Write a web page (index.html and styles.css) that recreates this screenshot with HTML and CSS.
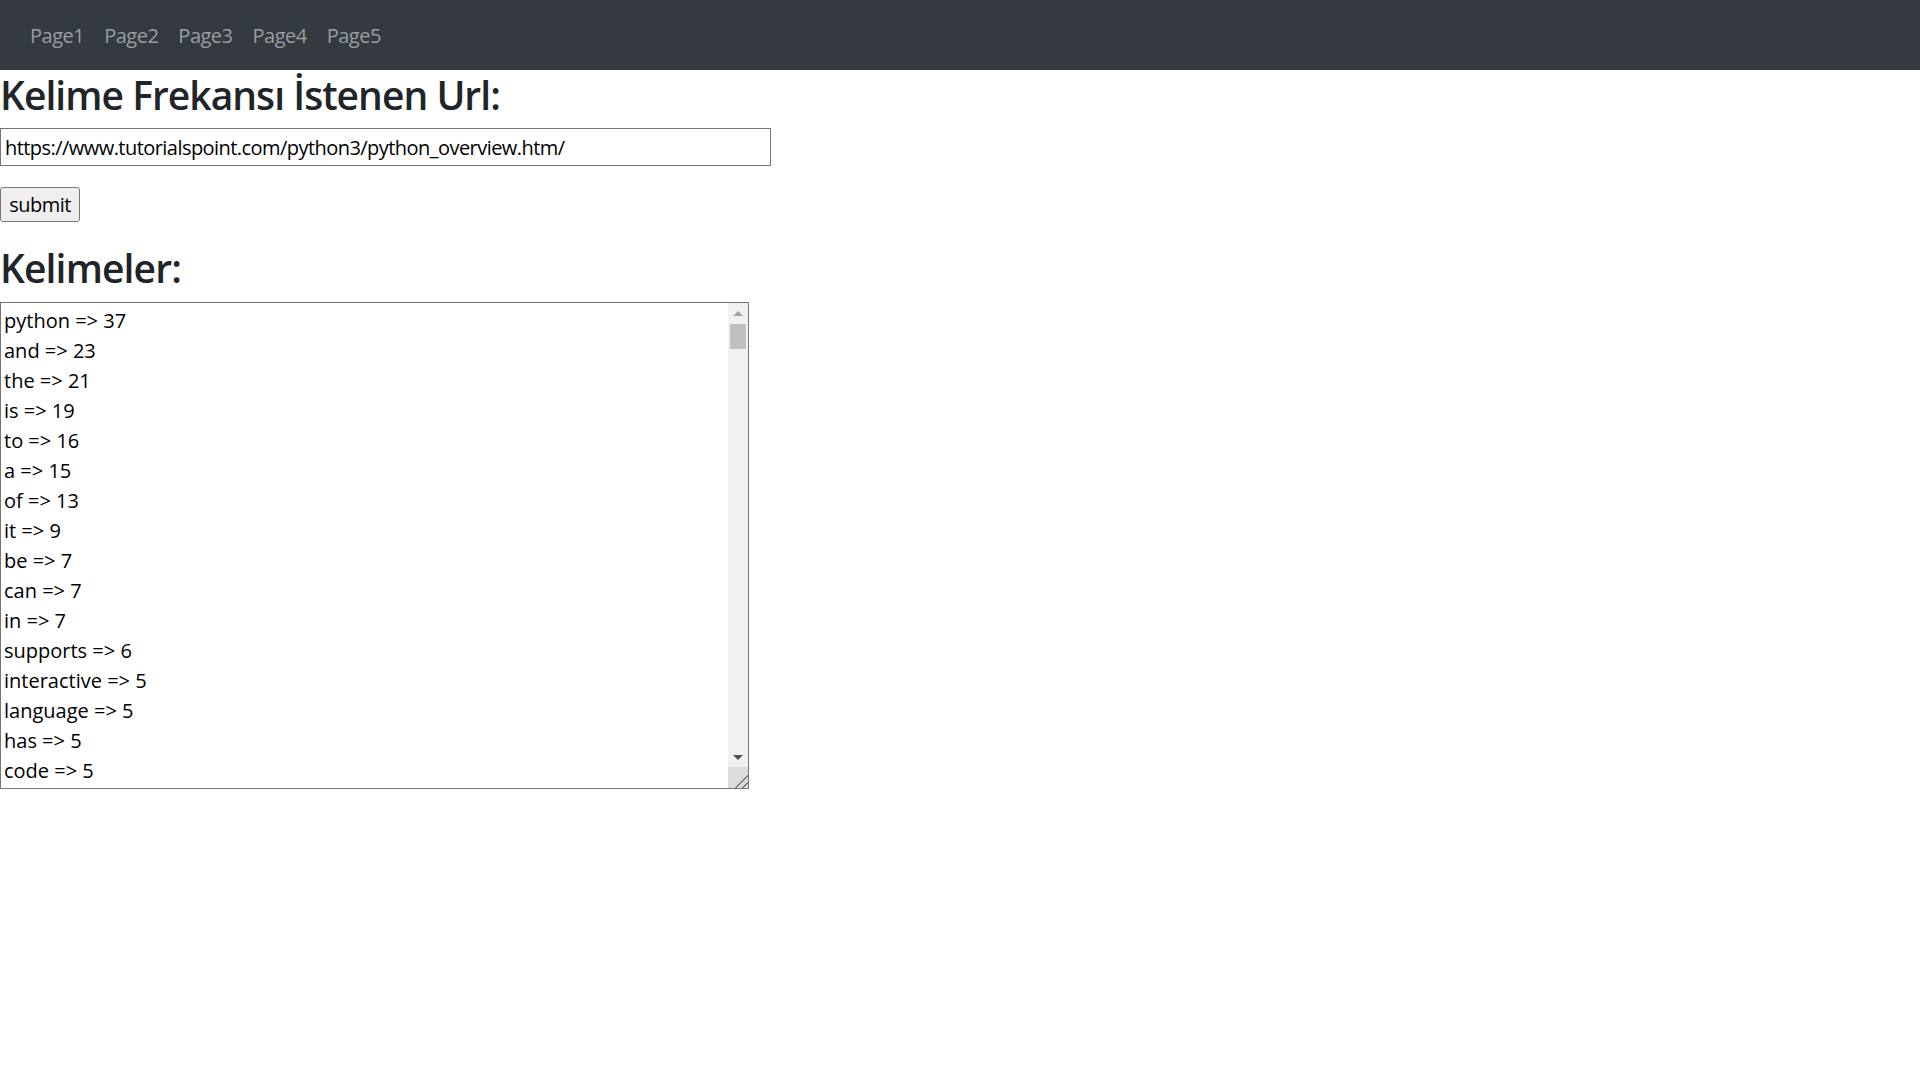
FILE: index.html
```html
<!DOCTYPE html>
<html lang="tr">
<head>
<meta charset="utf-8">
<title>Kelime Frekansı</title>
<link rel="stylesheet" href="styles.css">
</head>
<body>
<nav class="navbar">
  <a class="nav-link" href="#">Page1</a>
  <a class="nav-link" href="#">Page2</a>
  <a class="nav-link" href="#">Page3</a>
  <a class="nav-link" href="#">Page4</a>
  <a class="nav-link" href="#">Page5</a>
</nav>
<main class="content">
  <form class="url-form">
    <h2 class="heading">Kelime Frekansı İstenen Url:</h2>
    <input class="url-input" type="text" name="url" value="https://www.tutorialspoint.com/python3/python_overview.htm/">
    <button class="submit-btn" type="button">submit</button>
  </form>
  <h2 class="heading heading-words">Kelimeler:</h2>
  <div class="words-box">
    <textarea class="words" readonly>python =&gt; 37
and =&gt; 23
the =&gt; 21
is =&gt; 19
to =&gt; 16
a =&gt; 15
of =&gt; 13
it =&gt; 9
be =&gt; 7
can =&gt; 7
in =&gt; 7
supports =&gt; 6
interactive =&gt; 5
language =&gt; 5
has =&gt; 5
code =&gt; 5
programming =&gt; 5
interpreter =&gt; 5
languages =&gt; 5
other =&gt; 5
object =&gt; 5
oriented =&gt; 4
easy =&gt; 4
with =&gt; 4
you =&gt; 4
your =&gt; 4
programs =&gt; 4
standard =&gt; 4
library =&gt; 4
mode =&gt; 4
scripting =&gt; 4
features =&gt; 4
large =&gt; 4
interpreted =&gt; 4
databases =&gt; 4
this =&gt; 4
that =&gt; 4
on =&gt; 4
high =&gt; 3
level =&gt; 3
designed =&gt; 3
readable =&gt; 3
uses =&gt; 3
english =&gt; 3
keywords =&gt; 3
fewer =&gt; 3
than =&gt; 3
at =&gt; 3
runtime =&gt; 3
by =&gt; 3
do =&gt; 3
not =&gt; 3
for =&gt; 3
many =&gt; 3
was =&gt; 3
developed =&gt; 3
guido =&gt; 3
van =&gt; 3
rossum =&gt; 3
gui =&gt; 3
provides =&gt; 3
support =&gt; 3
c =&gt; 3
unix =&gt; 3
windows =&gt; 3
are =&gt; 3
allows =&gt; 3
add =&gt; 3
structure =&gt; 3
also =&gt; 3
source =&gt; 3
as =&gt; 3
an =&gt; 3
highly =&gt; 2
frequently =&gt; 2
where =&gt; 2
use =&gt; 2
punctuation =&gt; 2
syntactical =&gt; 2
constructions =&gt; 2
processed =&gt; 2
need =&gt; 2
compile =&gt; 2
before =&gt; 2
executing =&gt; 2
similar =&gt; 2
perl =&gt; 2
php =&gt; 2
actually =&gt; 2
sit =&gt; 2
prompt =&gt; 2
interact =&gt; 2
directly =&gt; 2
write =&gt; 2
style =&gt; 2
technique =&gt; 2
encapsulates =&gt; 2
within =&gt; 2
objects =&gt; 2
beginner =&gt; 2
great =&gt; 2
wide =&gt; 2
range =&gt; 2
applications =&gt; 2
simple =&gt; 2
text =&gt; 2
processing =&gt; 2
www =&gt; 2
browsers =&gt; 2
games =&gt; 2
history =&gt; 2
late =&gt; 2
eighties =&gt; 2
early =&gt; 2
nineties =&gt; 2
research =&gt; 2
institute =&gt; 2
mathematics =&gt; 2
computer =&gt; 2
science =&gt; 2
netherlands =&gt; 2
derived =&gt; 2
abc =&gt; 2
modula =&gt; 2
smalltalk =&gt; 2
shell =&gt; 2
copyrighted =&gt; 2
general =&gt; 2
public =&gt; 2
license =&gt; 2
gpl =&gt; 2
now =&gt; 2
maintained =&gt; 2
core =&gt; 2
development =&gt; 2
team =&gt; 2
though =&gt; 2
still =&gt; 2
holds =&gt; 2
vital =&gt; 2
role =&gt; 2
directing =&gt; 2
its =&gt; 2
progress =&gt; 2
learn =&gt; 2
read =&gt; 2
maintain =&gt; 2
broad =&gt; 2
bulk =&gt; 2
very =&gt; 2
portable =&gt; 2
cross =&gt; 2
platform =&gt; 2
compatible =&gt; 2
mac =&gt; 2
testing =&gt; 2
debugging =&gt; 2
snippets =&gt; 2
run =&gt; 2
variety =&gt; 2
hardware =&gt; 2
platforms =&gt; 2
same =&gt; 2
interface =&gt; 2
extendable =&gt; 2
low =&gt; 2
modules =&gt; 2
these =&gt; 2
enable =&gt; 2
programmers =&gt; 2
tools =&gt; 2
more =&gt; 2
efficient =&gt; 2
interfaces =&gt; 2
all =&gt; 2
major =&gt; 2
commercial =&gt; 2
system =&gt; 2
calls =&gt; 2
libraries =&gt; 2
systems =&gt; 2
ported =&gt; 2
such =&gt; 2
scalable =&gt; 2
better =&gt; 2
below =&gt; 1
mentioned =&gt; 1
good =&gt; 1
list =&gt; 1
functional =&gt; 1
methods =&gt; 1
well =&gt; 1
oop =&gt; 1
used =&gt; 1
byte =&gt; 1
building =&gt; 1
dynamic =&gt; 1
data =&gt; 1
types =&gt; 1
checking =&gt; 1
automatic =&gt; 1
garbage =&gt; 1
collection =&gt; 1
easily =&gt; 1
integrated =&gt; 1
cobra =&gt; 1
activex =&gt; 1
corba =&gt; 1
java =&gt; 1
algol =&gt; 1
ideas =&gt; 1
clearly =&gt; 1
defined =&gt; 1
syntax =&gt; 1
quickly =&gt; 1
student =&gt; 1
pick =&gt; 1
fast =&gt; 1
eyes =&gt; 1
fairly =&gt; 1
extensive =&gt; 1
rich =&gt; 1
kinds =&gt; 1
access =&gt; 1
mix =&gt; 1
usable =&gt; 1
lets =&gt; 1
real =&gt; 1
basic =&gt; 1
scripts =&gt; 1
created =&gt; 1
example =&gt; 1
macintosh =&gt; 1
version =&gt; 1
released =&gt; 1
year =&gt; 1
copyright =&gt; 1
open =&gt; 1
page =&gt; 1
overview =&gt; 1
tutorial =&gt; 1
lines =&gt; 1
words =&gt; 1
much =&gt; 1
easier =&gt; 1
form =&gt; 1
customize =&gt; 1
own =&gt; 1
built =&gt; 1
together =&gt; 1
offers =&gt; 1
excellent =&gt; 1
included =&gt; 1
database =&gt; 1
main =&gt; 1
one =&gt; 1
which =&gt; 1
their =&gt; 1
there =&gt; 1
those =&gt; 1
when =&gt; 1
based =&gt; 1
like =&gt; 1
some =&gt; 1
new =&gt; 1
most =&gt; 1
from =&gt; 1
first =&gt; 1</textarea>
    <div class="vscroll" aria-hidden="true">
      <div class="vs-btn vs-up"></div>
      <div class="vs-track"><div class="vs-thumb"></div></div>
      <div class="vs-btn vs-down"></div>
      <div class="vs-resizer"></div>
    </div>
  </div>
</main>
</body>
</html>
```

FILE: styles.css
```css
html, body {
  margin: 0;
  padding: 0;
}

body {
  font-family: "Open Sans", "Liberation Sans", sans-serif;
  font-size: 20px;
  line-height: 1.5;
  color: #212529;
  background: #fff;
}

.navbar {
  display: flex;
  align-items: center;
  height: 70px;
  padding: 0 20px;
  box-sizing: border-box;
  background: #343a40;
}

.nav-link {
  padding: 11px 10px 9px;
  font-size: 20px;
  line-height: 30px;
  letter-spacing: -0.5px;
  color: #9a9da0;
  text-decoration: none;
}

.content {
  display: block;
}

.url-form {
  margin: 0;
}

.heading {
  margin: 1px 0 9px;
  font-size: 39px;
  line-height: 48px;
  font-weight: 600;
  letter-spacing: -0.97px;
  color: #212529;
}

.heading-words {
  margin-top: 22px;
  margin-bottom: 10px;
  letter-spacing: -0.87px;
}

.url-input {
  display: block;
  box-sizing: border-box;
  width: 771px;
  height: 38px;
  margin: 0;
  padding: 0 4px;
  border: 1px solid #767676;
  border-radius: 0;
  font-family: inherit;
  font-size: 20px;
  letter-spacing: -0.55px;
  color: #000;
  background: #fff;
  outline: none;
}

.submit-btn {
  display: block;
  box-sizing: border-box;
  width: 80px;
  height: 35px;
  margin: 21px 0 0;
  padding: 0;
  border: 1px solid #767676;
  border-radius: 3px;
  background: #efefef;
  font-family: inherit;
  font-size: 20px;
  letter-spacing: -0.5px;
  line-height: 1;
  color: #000;
}

.words-box {
  display: flex;
  box-sizing: border-box;
  width: 749px;
  height: 487px;
  border: 1px solid #767676;
  background: #fff;
}

.words {
  flex: 1;
  min-width: 0;
  box-sizing: border-box;
  height: 100%;
  margin: 0;
  padding: 3px 3px 2px;
  border: none;
  font-family: inherit;
  font-size: 20px;
  line-height: 30px;
  color: #000;
  background: #fff;
  resize: none;
  overflow: hidden;
  scrollbar-width: none;
  white-space: pre;
  outline: none;
}

.vscroll {
  display: flex;
  flex-direction: column;
  width: 20px;
  flex: none;
  background: #f1f1f1;
}

.vs-btn {
  display: flex;
  align-items: center;
  justify-content: center;
  height: 20px;
  flex: none;
}

.vs-btn::before {
  content: "";
  width: 0;
  height: 0;
  border-left: 5px solid transparent;
  border-right: 5px solid transparent;
}

.vs-up::before {
  border-bottom: 5px solid #a3a3a3;
}

.vs-down::before {
  border-top: 5px solid #505050;
}

.vs-track {
  flex: 1;
  padding-top: 1px;
}

.vs-thumb {
  height: 25px;
  margin: 0 2px;
  background: #c1c1c1;
}

.vs-resizer {
  height: 21px;
  flex: none;
  background: linear-gradient(135deg, #dcdcdc 0 67%, #7d7d7d 67% 71%, #dcdcdc 71% 85%, #7d7d7d 85% 89%, #dcdcdc 89%);
}
```
